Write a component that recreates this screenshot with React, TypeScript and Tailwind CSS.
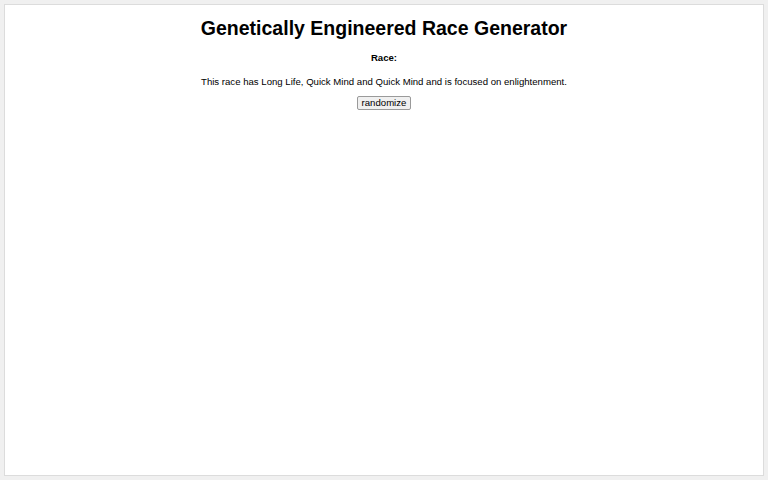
import { useState } from "react";

const traits = ["Long Life", "Quick Mind", "Strong Body", "Keen Eyes", "Thick Skin"];
const focuses = ["enlightenment", "war", "trade", "exploration", "art"];

const pick = (list: string[]) => list[Math.floor(Math.random() * list.length)];

export default function App() {
  const [race, setRace] = useState({
    a: "Long Life",
    b: "Quick Mind",
    c: "Quick Mind",
    focus: "enlightenment",
  });

  const randomize = () =>
    setRace({ a: pick(traits), b: pick(traits), c: pick(traits), focus: pick(focuses) });

  return (
    <div className="h-[480px] w-[768px] bg-[#f0f0f0] px-[4px] pt-[4px] pb-[4px] font-['Liberation_Sans',Arial,sans-serif] text-black">
      <div className="flex h-full flex-col items-center border border-[#dcdcdc] bg-white pt-[12px]">
        <h1 className="text-[19.5px] font-bold leading-[22px]">Genetically Engineered Race Generator</h1>
        <p className="mt-[13px] text-[9.6px] font-bold leading-[12px]">Race:</p>
        <p className="mt-[12px] text-[9.6px] leading-[12px]">
          This race has {race.a}, {race.b} and {race.c} and is focused on {race.focus}.
        </p>
        <button
          type="button"
          onClick={randomize}
          className="mt-[8px] h-[14px] rounded-[2px] border border-[#9a9a9a] bg-[#f0f0f0] px-[4px] text-[9.6px] leading-[12px]"
        >
          randomize
        </button>
      </div>
    </div>
  );
}
